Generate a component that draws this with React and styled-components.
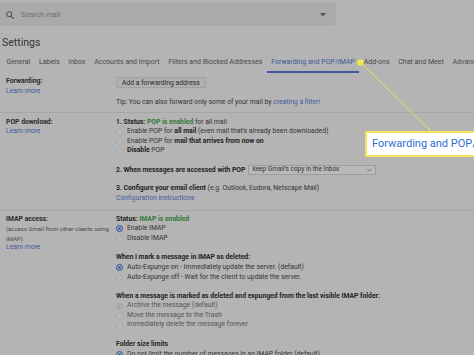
import React from "react";
import styled, { createGlobalStyle } from "styled-components";

const Global = createGlobalStyle`
  html, body { margin: 0; padding: 0; }
  body {
    width: 474px; height: 355px; overflow: hidden;
    background: #b4b4b4;
    font-family: Roboto, "Liberation Sans", Arial, sans-serif;
    color: #2c2c2c;
  }
`;

const Page = styled.div`
  position: relative;
  width: 474px;
  height: 355px;
  overflow: hidden;
`;

const SearchBar = styled.div`
  margin-top: 3px;
  width: 336px;
  height: 23px;
  background: #aaaaaa;
  border-radius: 0 4px 4px 0;
  display: flex;
  align-items: center;
  padding: 0 10px 0 5px;
  box-sizing: border-box;
  gap: 6px;
`;

const SearchText = styled.span`
  flex: 1;
  font-size: 7.5px;
  color: #6e6e6e;
`;

const Title = styled.div`
  font-size: 10.5px;
  color: #333;
  padding: 10px 0 0 2px;
  height: 21px;
  box-sizing: border-box;
`;

const Tabs = styled.div`
  display: flex;
  padding-left: 2px;
  margin-top: 11px;
  white-space: nowrap;
`;

const Tab = styled.div`
  font-size: 7px;
  padding: 0 4.4px 4px;
  color: ${(p) => (p.$active ? "#3b5a9c" : "#4a4a4a")};
  border-bottom: 2px solid ${(p) => (p.$active ? "#3b5a9c" : "transparent")};
  line-height: 9px;
`;

const Section = styled.div`
  display: grid;
  grid-template-columns: 110px 1fr;
  padding: ${(p) => p.$pad || "5px 0 5px 6px"};
  border-bottom: ${(p) => (p.$last ? "none" : "1px solid #a6a6a6")};
  font-size: 6.8px;
  line-height: 9.6px;
  white-space: nowrap;
`;

const LabelCol = styled.div`
  display: flex;
  flex-direction: column;
`;

const Label = styled.div`
  font-weight: 700;
  color: #2a2a2a;
`;

const SubLabel = styled.div`
  font-size: 6px;
  color: #4a4a4a;
  line-height: 9.6px;
`;

const Link = styled.span`
  color: #3e5b9c;
`;

const Content = styled.div`
  display: flex;
  flex-direction: column;
`;

const Line = styled.div`
  color: #333;
  margin-top: ${(p) => p.$gap || 0}px;
`;

const B = styled.b`
  font-weight: 700;
  color: #222;
`;

const Green = styled.span`
  color: #2f7a36;
  font-weight: 700;
`;

const Button = styled.div`
  align-self: flex-start;
  border: 1px solid #a0a0a0;
  background: #b0b0b0;
  padding: 0 5px;
  height: 11px;
  line-height: 10px;
  box-sizing: border-box;
  color: #2a2a2a;
  border-radius: 1px;
  margin-bottom: 10px;
`;

const RadioRow = styled.div`
  display: flex;
  align-items: center;
  gap: 4px;
  height: 9.6px;
  color: ${(p) => (p.$dim ? "#555" : "#333")};
`;

const RadioDot = styled.span`
  width: 5px;
  height: 5px;
  border-radius: 50%;
  border: 1px solid ${(p) => (p.$gray ? "#a8a8a8" : p.$on ? "#3f5ea3" : "#a8a8a8")};
  background: ${(p) => (p.$on ? (p.$gray ? "#9c9c9c" : "#3f5ea3") : "#b9b9b9")};
  box-shadow: inset 0 0 0 1px ${(p) => (p.$on ? "#b9b9b9" : "transparent")};
  flex: none;
`;

const Select = styled.span`
  display: inline-flex;
  align-items: center;
  justify-content: space-between;
  width: 128px;
  height: 10px;
  box-sizing: border-box;
  border: 1px solid #9e9e9e;
  background: #b9b9b9;
  margin-left: 3px;
  padding: 0 3px;
  font-size: 6.5px;
  color: #333;
  vertical-align: middle;
`;

const Callout = styled.div`
  position: absolute;
  left: 365px;
  top: 131px;
  width: 130px;
  height: 26px;
  box-sizing: border-box;
  background: #ffffff;
  border: 2px solid #f3e35a;
  color: #2f6fd3;
  font-size: 11px;
  line-height: 22px;
  padding-left: 5px;
  white-space: nowrap;
`;

const Pointer = styled.svg`
  position: absolute;
  left: 0;
  top: 0;
  pointer-events: none;
`;

const Radio = ({ on, gray, dim, children }) => (
  <RadioRow $dim={dim}>
    <RadioDot $on={on} $gray={gray} />
    <span>{children}</span>
  </RadioRow>
);

const tabs = [
  "General",
  "Labels",
  "Inbox",
  "Accounts and Import",
  "Filters and Blocked Addresses",
  "Forwarding and POP/IMAP",
  "Add-ons",
  "Chat and Meet",
  "Advanced",
];

export default function App() {
  return (
    <Page>
      <Global />
      <SearchBar>
        <svg width="10" height="10" viewBox="0 0 24 24">
          <circle cx="10" cy="10" r="6" fill="none" stroke="#555" strokeWidth="2.6" />
          <line x1="14.5" y1="14.5" x2="21" y2="21" stroke="#555" strokeWidth="2.8" />
        </svg>
        <SearchText>Search mail</SearchText>
        <svg width="6" height="4" viewBox="0 0 6 4">
          <path d="M0 0 L6 0 L3 3.5 Z" fill="#555" />
        </svg>
      </SearchBar>
      <Title>Settings</Title>
      <Tabs>
        {tabs.map((t) => (
          <Tab key={t} $active={t === "Forwarding and POP/IMAP"}>
            {t}
          </Tab>
        ))}
      </Tabs>

      <Section $pad="4px 0 4px 6px">
        <LabelCol>
          <Label>Forwarding:</Label>
          <Link>Learn more</Link>
        </LabelCol>
        <Content>
          <Button>Add a forwarding address</Button>
          <Line>
            Tip: You can also forward only some of your mail by <Link>creating a filter!</Link>
          </Line>
        </Content>
      </Section>

      <Section $pad="5px 0 6px 6px">
        <LabelCol>
          <Label>POP download:</Label>
          <Link>Learn more</Link>
        </LabelCol>
        <Content>
          <Line>
            <B>1. Status: </B>
            <Green>POP is enabled</Green> for all mail
          </Line>
          <Radio>
            Enable POP for <B>all mail</B> (even mail that's already been downloaded)
          </Radio>
          <Radio>
            Enable POP for <B>mail that arrives from now on</B>
          </Radio>
          <Radio>
            <B>Disable</B> POP
          </Radio>
          <Line $gap={9}>
            <B>2. When messages are accessed with POP</B>
            <Select>
              <span>keep Gmail's copy in the Inbox</span>
              <svg width="5" height="4" viewBox="0 0 10 6">
                <path d="M1 1 L5 5 L9 1" fill="none" stroke="#555" strokeWidth="1.6" />
              </svg>
            </Select>
          </Line>
          <Line $gap={9}>
            <B>3. Configure your email client</B> (e.g. Outlook, Eudora, Netscape Mail)
          </Line>
          <Link>Configuration instructions</Link>
        </Content>
      </Section>

      <Section $last $pad="4px 0 0 6px">
        <LabelCol>
          <Label>IMAP access:</Label>
          <SubLabel>(access Gmail from other clients using</SubLabel>
          <SubLabel>IMAP)</SubLabel>
          <Link>Learn more</Link>
        </LabelCol>
        <Content>
          <Line>
            <B>Status: </B>
            <Green>IMAP is enabled</Green>
          </Line>
          <Radio on>Enable IMAP</Radio>
          <Radio>Disable IMAP</Radio>
          <Line $gap={10}>
            <B>When I mark a message in IMAP as deleted:</B>
          </Line>
          <Radio on>Auto-Expunge on - Immediately update the server. (default)</Radio>
          <Radio>Auto-Expunge off - Wait for the client to update the server.</Radio>
          <Line $gap={9.5}>
            <B>When a message is marked as deleted and expunged from the last visible IMAP folder:</B>
          </Line>
          <Radio on gray dim>Archive the message (default)</Radio>
          <Radio dim>Move the message to the Trash</Radio>
          <Radio dim>Immediately delete the message forever</Radio>
          <Line $gap={10.5}>
            <B>Folder size limits</B>
          </Line>
          <Radio on>Do not limit the number of messages in an IMAP folder (default)</Radio>
        </Content>
      </Section>

      <Pointer width="474" height="355">
        <line x1="361" y1="63" x2="432" y2="132" stroke="#efe066" strokeWidth="1" />
        <circle cx="360.5" cy="62.5" r="3.2" fill="#f4e64a" />
      </Pointer>
      <Callout>Forwarding and POP/IMAP</Callout>
    </Page>
  );
}
